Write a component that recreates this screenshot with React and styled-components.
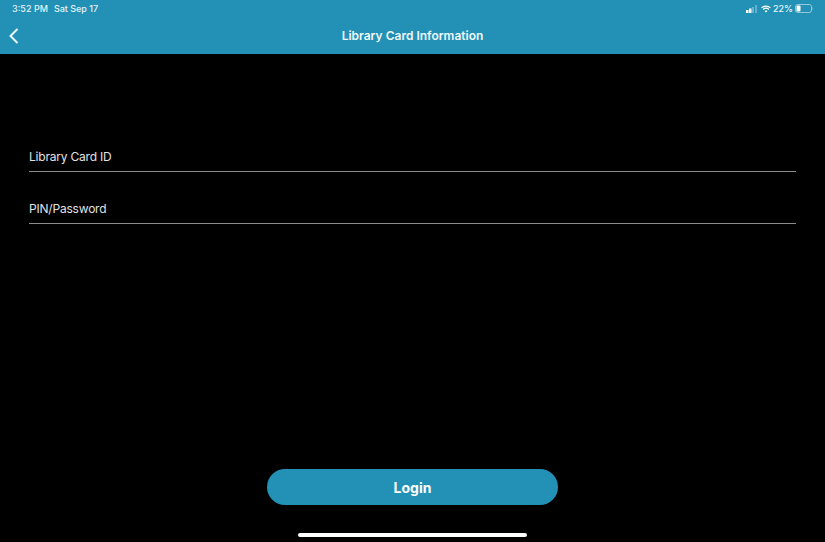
import React from 'react'
import styled, { createGlobalStyle } from 'styled-components'

const GlobalStyle = createGlobalStyle`
    html, body {
        margin: 0;
        padding: 0;
        background: #000;
    }
    body {
        font-family: Inter, "Liberation Sans", sans-serif;
    }
`

const Screen = styled.div`
    width: 825px;
    height: 542px;
    display: flex;
    flex-direction: column;
    background: #000;
    overflow: hidden;
`

const Header = styled.header`
    height: 54px;
    flex-shrink: 0;
    background: #2390b5;
    color: #fff;
    display: flex;
    flex-direction: column;
`

const StatusBar = styled.div`
    height: 17px;
    padding: 0 11px 0 12px;
    display: flex;
    align-items: center;
    justify-content: space-between;
    font-size: 9px;
    font-weight: 500;
    color: #e4f3f8;
`

const StatusGroup = styled.div`
    display: flex;
    align-items: center;
    gap: ${props => props.$gap || 8}px;
`

const NavBar = styled.div`
    flex: 1;
    display: grid;
    grid-template-columns: 40px 1fr 40px;
    align-items: center;
`

const BackButton = styled.button`
    width: 30px;
    height: 30px;
    padding: 0 0 0 9px;
    border: 0;
    background: none;
    display: flex;
    align-items: center;
    color: #e8f6fb;
`

const Title = styled.h1`
    margin: 0;
    text-align: center;
    font-size: 12px;
    font-weight: 600;
    color: #eef8fb;
`

const Form = styled.form`
    flex: 1;
    display: flex;
    flex-direction: column;
    padding: 0 29px;
`

const Fields = styled.div`
    margin-top: 91px;
    display: flex;
    flex-direction: column;
    gap: 25px;
`

const Field = styled.div`
    height: 27px;
    box-sizing: border-box;
    border-bottom: 1px solid #8a8a8a;
    font-size: 12px;
    letter-spacing: -0.2px;
    line-height: 20px;
    padding-top: 2px;
    color: #e2e2e2;
`

const Actions = styled.div`
    margin-top: auto;
    display: flex;
    flex-direction: column;
    align-items: center;
`

const LoginButton = styled.button`
    width: 291px;
    height: 36px;
    border: 0;
    border-radius: 18px;
    background: #2390b5;
    color: #fff;
    font-family: inherit;
    font-size: 14px;
    font-weight: 700;
`

const HomeIndicator = styled.div`
    width: 229px;
    height: 4px;
    margin: 28px 0 5px;
    border-radius: 2px;
    background: #fff;
`

const SignalIcon = () => (
    <svg width="13" height="8" viewBox="0 0 13 8">
        <rect x="0" y="5" width="2.5" height="3" fill="#fff" />
        <rect x="3" y="3.5" width="2.5" height="4.5" fill="#fff" />
        <rect x="6" y="2" width="2" height="6" fill="#fff" opacity="0.3" />
        <rect x="9" y="0" width="2" height="8" fill="#fff" opacity="0.3" />
    </svg>
)

const WifiIcon = () => (
    <svg width="10" height="8" viewBox="0 0 11 8" fill="none" stroke="#fff" strokeWidth="1.3">
        <path d="M0.6 2.8 C3.3 0.2 7.7 0.2 10.4 2.8" />
        <path d="M2.3 4.5 C4.1 2.9 6.9 2.9 8.7 4.5" />
        <path d="M5.5 7.8 L3.9 6.1 C4.8 5.4 6.2 5.4 7.1 6.1 Z" fill="#fff" stroke="none" />
    </svg>
)

const BatteryIcon = () => (
    <svg width="19" height="9" viewBox="0 0 19 9">
        <rect x="0.5" y="0.5" width="16" height="8" rx="2.2" fill="none" stroke="#fff" strokeOpacity="0.5" />
        <rect x="1.5" y="1.5" width="4" height="6" rx="1" fill="#fff" />
        <path d="M17.6 3 C18.4 3.3 18.4 5.7 17.6 6 Z" fill="#fff" fillOpacity="0.5" />
    </svg>
)

export default function App() {
    return (
        <Screen>
            <GlobalStyle />
            <Header>
                <StatusBar>
                    <StatusGroup $gap={6}>
                        <span>3:52 PM</span>
                        <span>Sat Sep 17</span>
                    </StatusGroup>
                    <StatusGroup $gap={2}>
                        <SignalIcon />
                        <WifiIcon />
                        <span>22%</span>
                        <BatteryIcon />
                    </StatusGroup>
                </StatusBar>
                <NavBar>
                    <BackButton type="button" aria-label="Back">
                        <svg width="10" height="16" viewBox="0 0 10 16" fill="none" stroke="currentColor" strokeWidth="2">
                            <path d="M8.5 1 L1.5 8 L8.5 15" />
                        </svg>
                    </BackButton>
                    <Title>Library Card Information</Title>
                </NavBar>
            </Header>
            <Form>
                <Fields>
                    <Field>Library Card ID</Field>
                    <Field>PIN/Password</Field>
                </Fields>
                <Actions>
                    <LoginButton type="button">Login</LoginButton>
                    <HomeIndicator />
                </Actions>
            </Form>
        </Screen>
    )
}
